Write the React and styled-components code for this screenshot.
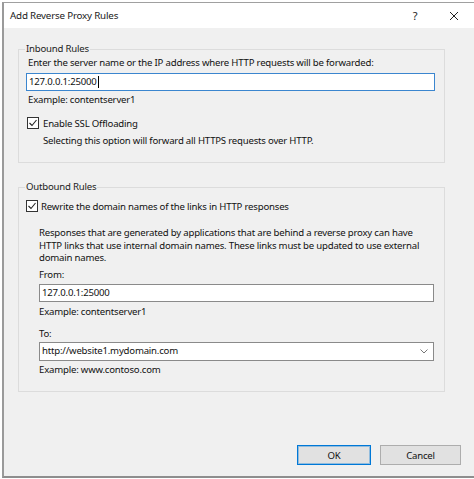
import styled, { createGlobalStyle } from "styled-components";

const GlobalStyle = createGlobalStyle`
  html, body {
    margin: 0;
    padding: 0;
    background: #ffffff;
  }
  body {
    font-family: "Noto Sans", "Open Sans", Arial, sans-serif;
    font-size: 9.6px;
    letter-spacing: -0.2px;
    color: #111;
  }
`;

const Frame = styled.div`
  box-sizing: border-box;
  margin: 2px 0 0 2px;
  height: 476px;
  border-left: 2px solid #9a9a9a;
  border-top: 1px solid #a0a0a0;
  border-bottom: 2px solid #8e8e8e;
  display: flex;
  flex-direction: column;
`;

const TitleBar = styled.div`
  height: 25px;
  background: #fff;
  display: flex;
  align-items: center;
  padding-left: 6px;
  font-size: 9.8px;
  color: #1a1a1a;
`;

const Title = styled.div`
  flex: 1;
`;

const Help = styled.div`
  width: 20px;
  text-align: center;
  font-size: 11px;
  margin-right: 19px;
  color: #222;
`;

const Close = styled.div`
  width: 20px;
  display: flex;
  justify-content: center;
  margin-right: 10px;
`;

const Body = styled.div`
  flex: 1;
  background: #f0f0f0;
  padding: 14px 13px 11px 14px;
  display: flex;
  flex-direction: column;
`;

const Group = styled.fieldset`
  margin: ${(p) => (p.$first ? "0" : "17px")} 16px 0 0;
  padding: 0 7px ${(p) => p.$pb}px 7px;
  border: 1px solid #dcdcdc;
  min-inline-size: 0;
  display: flex;
  flex-direction: column;
`;

const Legend = styled.legend`
  padding: 0 1px;
  margin-left: -1px;
  line-height: 14px;
  color: #222;
`;

const Text = styled.div`
  line-height: ${(p) => p.$lh || 12}px;
  margin-top: ${(p) => p.$mt || 0}px;
  padding-left: ${(p) => p.$pl || 0}px;
  white-space: ${(p) => (p.$wrap ? "normal" : "nowrap")};
`;

const Input = styled.div`
  box-sizing: border-box;
  height: ${(p) => p.$h || 18}px;
  margin-top: ${(p) => p.$mt || 0}px;
  margin-right: ${(p) => p.$mr || 0}px;
  background: #fff;
  border: 1px solid ${(p) => (p.$focus ? "#3b86cf" : "#8a8a8a")};
  display: flex;
  align-items: center;
  padding-left: 2px;
  line-height: 12px;
`;

const Caret = styled.span`
  display: inline-block;
  width: 1px;
  height: 12px;
  background: #000;
  margin-left: 1px;
`;

const InputValue = styled.span`
  flex: 1;
  display: flex;
  align-items: center;
`;

const Chevron = styled.span`
  display: flex;
  width: 14px;
  justify-content: center;
  margin-right: 2px;
`;

const CheckRow = styled.div`
  display: flex;
  align-items: center;
  height: 12px;
  margin-top: ${(p) => p.$mt}px;
  padding-left: ${(p) => p.$pl || 0}px;
  gap: ${(p) => p.$gap}px;
  white-space: nowrap;
`;

const Box = styled.span`
  box-sizing: border-box;
  width: 12px;
  height: 12px;
  border: 1px solid #333;
  background: #fff;
  display: flex;
  align-items: center;
  justify-content: center;
`;

const Indent = styled.div`
  padding-left: 13px;
  display: flex;
  flex-direction: column;
`;

const ButtonRow = styled.div`
  margin-top: auto;
  display: flex;
  justify-content: flex-end;
  gap: 9px;
`;

const Button = styled.div`
  box-sizing: border-box;
  width: ${(p) => p.$w}px;
  height: 20px;
  background: #e1e1e1;
  border: 1px solid ${(p) => (p.$primary ? "#0078d7" : "#adadad")};
  box-shadow: ${(p) => (p.$primary ? "inset 0 0 0 1px rgba(0,120,215,0.35)" : "none")};
  display: flex;
  align-items: center;
  justify-content: center;
`;

const Check = () => (
  <Box>
    <svg width="10" height="10" viewBox="0 0 10 10">
      <polyline points="1.5,5 4,7.5 8.5,2" fill="none" stroke="#222" strokeWidth="1.1" />
    </svg>
  </Box>
);

export default function App() {
  return (
    <>
      <GlobalStyle />
      <Frame>
        <TitleBar>
          <Title>Add Reverse Proxy Rules</Title>
          <Help>?</Help>
          <Close>
            <svg width="10" height="10" viewBox="0 0 10 10">
              <path d="M1 1L9 9M9 1L1 9" stroke="#222" strokeWidth="1" />
            </svg>
          </Close>
        </TitleBar>
        <Body>
          <Group $first $pb={15}>
            <Legend>Inbound Rules</Legend>
            <Text $mt={1} $pl={2}>
              Enter the server name or the IP address where HTTP requests will be forwarded:
            </Text>
            <Input $mt={4} $mr={2} $focus>
              <InputValue>
                127.0.0.1:25000
                <Caret />
              </InputValue>
            </Input>
            <Text $mt={3} $pl={2}>
              Example: contentserver1
            </Text>
            <CheckRow $mt={11} $pl={1} $gap={4}>
              <Check />
              Enable SSL Offloading
            </CheckRow>
            <Text $mt={6} $pl={17}>
              Selecting this option will forward all HTTPS requests over HTTP.
            </Text>
          </Group>
          <Group $pb={15}>
            <Legend>Outbound Rules</Legend>
            <CheckRow $mt={6} $gap={3}>
              <Check />
              Rewrite the domain names of the links in HTTP responses
            </CheckRow>
            <Indent>
              <Text $mt={15} $lh={12.5} $wrap>
                Responses that are generated by applications that are behind a reverse proxy can have
                HTTP links that use internal domain names. These links must be updated to use external
                domain names.
              </Text>
              <Text $mt={4}>From:</Text>
              <Input $mt={3} $mr={3}>
                <InputValue>127.0.0.1:25000</InputValue>
              </Input>
              <Text $mt={4}>Example: contentserver1</Text>
              <Text $mt={10}>To:</Text>
              <Input $mt={2} $mr={3} $h={19}>
                <InputValue>http://website1.mydomain.com</InputValue>
                <Chevron>
                  <svg width="8" height="5" viewBox="0 0 8 5">
                    <polyline points="0.5,0.5 4,4 7.5,0.5" fill="none" stroke="#777" strokeWidth="1" />
                  </svg>
                </Chevron>
              </Input>
              <Text $mt={3}>Example: www.contoso.com</Text>
            </Indent>
          </Group>
          <ButtonRow>
            <Button $w={74} $primary>
              OK
            </Button>
            <Button $w={81}>Cancel</Button>
          </ButtonRow>
        </Body>
      </Frame>
    </>
  );
}
